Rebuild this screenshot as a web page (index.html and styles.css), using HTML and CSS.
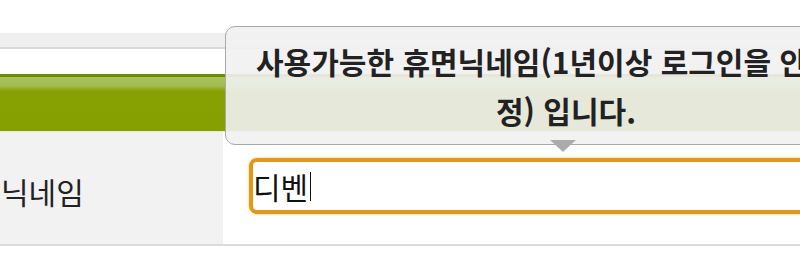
FILE: index.html
```html
<!DOCTYPE html>
<html lang="ko">
<head>
<meta charset="utf-8">
<title>닉네임</title>
<link rel="stylesheet" href="styles.css">
</head>
<body>
<div class="page">
  <div class="top-gap"></div>
  <div class="toolbar"></div>
  <div class="search-row"></div>
  <div class="header"></div>
  <div class="row">
    <div class="label">닉네임</div>
    <div class="field">
      <div class="nick-input"><span class="value">디벤</span><span class="caret"></span></div>
    </div>
  </div>
  <div class="tooltip">
    <div class="line line-1">사용가능한 휴면닉네임(1년이상 로그인을 안</div>
    <div class="line line-2">정) 입니다.</div>
  </div>
</div>
</body>
</html>
```
FILE: styles.css
```css
html, body {
  margin: 0;
  padding: 0;
  background: #ffffff;
}
body {
  width: 800px;
  height: 259px;
  overflow: hidden;
  font-family: "Noto Sans CJK KR", "Noto Sans", sans-serif;
  color: #222222;
}
.page {
  position: relative;
  width: 800px;
  height: 259px;
  overflow: hidden;
}
.top-gap {
  height: 33px;
  background: #ffffff;
}
.toolbar {
  height: 14px;
  background: #efefef;
  border-bottom: 2px solid #dadada;
}
.search-row {
  height: 25px;
  background: #ffffff;
}
.header {
  height: 54px;
  border-top: 3px solid #6d8b00;
  background: linear-gradient(#aac25c 0, #a3bb4e 9px, #87a102 14px, #85a000 100%);
}
.row {
  display: flex;
  height: 112px;
  border-top: 1px solid #e6e9dc;
  border-bottom: 2px solid #dcdcdc;
}
.label {
  flex: 0 0 223px;
  background: #f2f2f2;
  display: flex;
  align-items: center;
  padding-left: 1px;
  box-sizing: border-box;
  font-size: 30px;
  font-weight: 400;
  color: #222222;
  padding-top: 6px;
}
.field {
  flex: 1 1 auto;
  min-width: 0;
  background: #ffffff;
  padding: 26px 0 0 26px;
}
.nick-input {
  box-sizing: border-box;
  width: 600px;
  height: 56px;
  border: 4px solid #e0991e;
  border-radius: 8px;
  box-shadow: 0 0 2px 1px #ffe7a8;
  display: flex;
  align-items: center;
  padding-left: 0;
  font-size: 30px;
  color: #111111;
}
.caret {
  display: inline-block;
  width: 1px;
  height: 29px;
  background: #111111;
  margin-left: 2px;
}
.tooltip {
  position: absolute;
  left: 225px;
  top: 26px;
  width: 680px;
  height: 119px;
  box-sizing: border-box;
  border: 1px solid #a9a9a9;
  border-radius: 10px;
  background: rgba(241, 241, 241, 0.9);
  padding-top: 10px;
  font-size: 30px;
  font-weight: 700;
  line-height: 49px;
  color: #222222;
  white-space: nowrap;
}
.line-1 {
  padding-left: 30px;
}
.line-2 {
  padding-left: 270px;
}
.tooltip::after {
  content: "";
  position: absolute;
  left: 324px;
  top: calc(100% - 4px);
  border-left: 13px solid transparent;
  border-right: 13px solid transparent;
  border-top: 12px solid #ababab;
}
```
